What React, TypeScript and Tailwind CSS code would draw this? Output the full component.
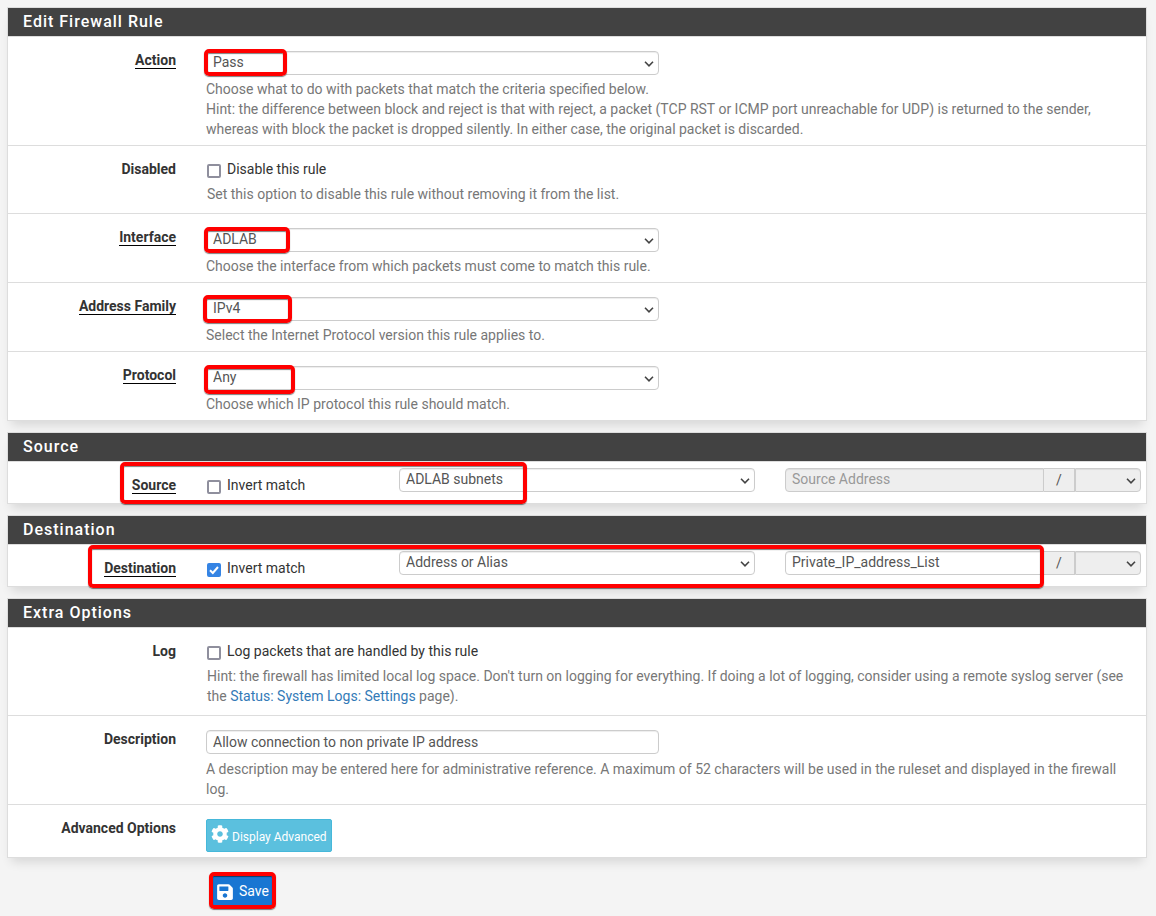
import React from "react";
import { FaCog, FaSave } from "react-icons/fa";

const Panel = ({
  title,
  children,
}: {
  title: string;
  children: React.ReactNode;
}) => (
  <section className="mb-[11px] border border-[#ddd] bg-white shadow-[0_8px_10px_-4px_rgba(0,0,0,0.12)]">
    <h2 className="h-[29px] border-b border-[#ddd] bg-[#424242] px-[15px] text-base leading-[27px] font-medium tracking-[1px] text-white">
      {title}
    </h2>
    <div className="divide-y divide-[#ddd]">{children}</div>
  </section>
);

const Row = ({
  label,
  htmlFor,
  underline,
  className = "pt-[13px]",
  children,
}: {
  label: string;
  htmlFor?: string;
  underline?: boolean;
  className?: string;
  children: React.ReactNode;
}) => (
  <div>
    <div className="relative -mx-[10px] grid grid-cols-12">
      <label
        htmlFor={htmlFor}
        className="col-span-2 px-[15px] pt-[13px] text-right leading-5 font-bold text-[#333]"
      >
        <span className={underline ? "border-b border-black" : ""}>
          {label}
        </span>
      </label>
      <div className={`col-span-10 ${className}`}>{children}</div>
    </div>
  </div>
);

const Mark = ({ className }: { className: string }) => (
  <span
    className={`pointer-events-none absolute z-10 rounded-[5px] border-4 border-[#ff0000] shadow-[0_1px_1px_rgba(0,0,0,0.5),inset_0_1px_1px_rgba(0,0,0,0.5)] ${className}`}
  />
);

const Select = ({
  id,
  value,
  disabled,
  label,
  className = "rounded-[4px]",
}: {
  id: string;
  value: string;
  disabled?: boolean;
  label?: string;
  className?: string;
}) => (
  <div className="relative">
    <select
      id={id}
      aria-label={label}
      disabled={disabled}
      defaultValue={value}
      className={`block h-6 w-full appearance-none border border-[#ccc] bg-white px-[6px] pb-[2px] text-sm leading-5 text-[#555] shadow-[inset_0_1px_1px_rgba(0,0,0,0.075)] disabled:bg-[#eee] disabled:opacity-100 ${className}`}
    >
      <option>{value}</option>
    </select>
    <svg
      viewBox="0 0 10 6"
      className="pointer-events-none absolute top-[10px] right-[5px] h-[6px] w-[10px]"
      fill="none"
      stroke="#444"
      strokeWidth="1.6"
    >
      <path d="M1 0.8 L5 4.8 L9 0.8" />
    </svg>
  </div>
);

const Checkbox = ({
  id,
  checked,
  children,
}: {
  id: string;
  checked?: boolean;
  children: React.ReactNode;
}) => (
  <label htmlFor={id} className="ml-px flex leading-5 text-[#333]">
    <span className="relative mt-[5px] mr-[6px] h-[14px] w-[14px]">
      <input
        id={id}
        type="checkbox"
        defaultChecked={checked}
        className="peer block h-[14px] w-[14px] appearance-none rounded-[2px] border-2 border-[#8f8f9d] bg-white checked:border-[#3584e4] checked:bg-[#3584e4]"
      />
      <svg
        viewBox="0 0 14 14"
        className="pointer-events-none absolute inset-0 hidden peer-checked:block"
        fill="none"
        stroke="white"
        strokeWidth="2"
      >
        <path d="M3 7.3 L5.8 10 L11 4" />
      </svg>
    </span>
    {children}
  </label>
);

const selects = [
  {
    id: "interface",
    label: "Interface",
    value: "ADLAB",
    help: "Choose the interface from which packets must come to match this rule.",
    mark: "-top-px -left-[2px] h-[26px] w-[86px]",
  },
  {
    id: "ipprotocol",
    label: "Address Family",
    value: "IPv4",
    help: "Select the Internet Protocol version this rule applies to.",
    mark: "-top-[2px] -left-[3px] h-7 w-[89px]",
  },
  {
    id: "proto",
    label: "Protocol",
    value: "Any",
    help: "Choose which IP protocol this rule should match.",
    mark: "-top-px -left-[2px] h-[29px] w-[91px]",
  },
];

const SelectRow = ({
  id,
  label,
  value,
  help,
  mark,
}: {
  id: string;
  label: string;
  value: string;
  help: React.ReactNode;
  mark: string;
}) => (
  <Row label={label} htmlFor={id} underline className="pt-[14px] pb-[6px]">
    <div className="grid grid-cols-10">
      <div className="col-span-5 px-[15px]">
        <div className="relative">
          <Select id={id} value={value} />
          <Mark className={mark} />
        </div>
      </div>
    </div>
    <p className="mt-1 px-[15px] leading-5 text-[#777]">{help}</p>
  </Row>
);

const AddressRow = ({
  id,
  label,
  type,
  address,
  checked,
  mark,
}: {
  id: string;
  label: string;
  type: string;
  address?: string;
  checked?: boolean;
  mark: string;
}) => (
  <Row label={label} htmlFor={`${id}type`} underline className="pt-[6px] pb-2">
    <div className="grid grid-cols-10">
      <div className="col-span-2 px-[15px] pt-[7px]">
        <Checkbox id={`${id}not`} checked={checked}>
          Invert match
        </Checkbox>
      </div>
      <div className="col-span-4 px-[15px]">
        <Select id={`${id}type`} value={type} />
      </div>
      <div className="col-span-4 flex px-[15px]">
        <input
          type="text"
          aria-label={`${label} Address`}
          placeholder={`${label} Address`}
          defaultValue={address}
          disabled={!address}
          className="h-6 min-w-0 flex-1 rounded-l-[4px] border border-[#ccc] bg-white px-[6px] pb-[2px] text-[#555] shadow-[inset_0_1px_1px_rgba(0,0,0,0.075)] placeholder:text-[#999] disabled:bg-[#eee]"
        />
        <span className="h-6 w-[31px] border-y border-r border-[#ccc] bg-[#eee] text-center leading-[22px] text-[#555]">
          /
        </span>
        <div className="w-[66px]">
          <Select
            id={`${id}mask`}
            label={`${label} mask`}
            value=""
            disabled
            className="rounded-r-[4px]"
          />
        </div>
      </div>
    </div>
    <Mark className={mark} />
  </Row>
);

const App: React.FC = () => {
  return (
    <main className="min-h-screen bg-[#f4f4f4] pt-[7px] pr-[9px] pl-[7px] font-['Roboto','Liberation_Sans',sans-serif] text-sm">
      <Panel title="Edit Firewall Rule">
        <SelectRow
          id="action"
          label="Action"
          value="Pass"
          mark="-top-[2px] -left-[2px] h-[27px] w-[83px]"
          help={
            <>
              Choose what to do with packets that match the criteria specified
              below.
              <br />
              Hint: the difference between block and reject is that with reject,
              a packet (TCP RST or ICMP port unreachable for UDP) is returned to
              the sender, whereas with block the packet is dropped silently. In
              either case, the original packet is discarded.
            </>
          }
        />
        <Row
          label="Disabled"
          htmlFor="disabled"
          className="px-[15px] pt-[13px] pb-[9px]"
        >
          <Checkbox id="disabled">Disable this rule</Checkbox>
          <p className="mt-[5px] ml-px leading-5 text-[#777]">
            Set this option to disable this rule without removing it from the
            list.
          </p>
        </Row>
        {selects.map((item) => (
          <SelectRow key={item.id} {...item} />
        ))}
      </Panel>

      <Panel title="Source">
        <AddressRow
          id="src"
          label="Source"
          type="ADLAB subnets"
          mark="top-0 left-[122px] h-[42px] w-[407px]"
        />
      </Panel>

      <Panel title="Destination">
        <AddressRow
          id="dst"
          label="Destination"
          type="Address or Alias"
          address="Private_IP_address_List"
          checked
          mark="top-0 left-[90px] h-[43px] w-[956px]"
        />
      </Panel>

      <Panel title="Extra Options">
        <Row label="Log" htmlFor="log" className="px-[15px] pt-[13px] pb-[9px]">
          <Checkbox id="log">Log packets that are handled by this rule</Checkbox>
          <p className="mt-[5px] ml-px leading-5 text-[#777]">
            Hint: the firewall has limited local log space. Don't turn on
            logging for everything. If doing a lot of logging, consider using a
            remote syslog server (see the{" "}
            <a href="#" className="text-[#337ab7]">
              Status: System Logs: Settings
            </a>{" "}
            page).
          </p>
        </Row>
        <Row label="Description" htmlFor="descr" className="pt-[14px] pb-[5px]">
          <div className="grid grid-cols-10">
            <div className="col-span-5 px-[15px]">
              <input
                id="descr"
                type="text"
                defaultValue="Allow connection to non private IP address"
                className="block h-6 w-full rounded-[4px] border border-[#ccc] bg-white px-[6px] text-[#555] shadow-[inset_0_1px_1px_rgba(0,0,0,0.075)]"
              />
            </div>
          </div>
          <p className="mt-[5px] px-[15px] leading-5 text-[#777]">
            A description may be entered here for administrative reference. A
            maximum of 52 characters will be used in the ruleset and displayed
            in the firewall log.
          </p>
        </Row>
        <Row
          label="Advanced Options"
          htmlFor="advanced"
          className="px-[15px] pt-[14px] pb-[5px]"
        >
          <button
            id="advanced"
            type="button"
            className="flex h-[33px] items-center gap-[3px] rounded-[2px] border border-[#46b8da] bg-[#5bc0de] px-1 text-xs text-white"
          >
            <FaCog className="mb-[3px] h-[18px] w-[18px]" />
            <span className="pt-[2px]">Display Advanced</span>
          </button>
        </Row>
      </Panel>

      <div className="-mx-[9px] grid grid-cols-12">
        <div className="col-span-10 col-start-3 px-[15px] pt-[3px]">
          <div className="relative ml-[3px] w-[67px] p-[3px]">
            <button
              type="submit"
              className="flex h-[31px] w-[61px] items-center gap-[6px] bg-[#1976d2] pl-[5px] text-white"
            >
              <FaSave className="mt-[2px] h-[18px] w-4" />
              Save
            </button>
            <Mark className="inset-0" />
          </div>
        </div>
      </div>
    </main>
  );
};

export default App;
